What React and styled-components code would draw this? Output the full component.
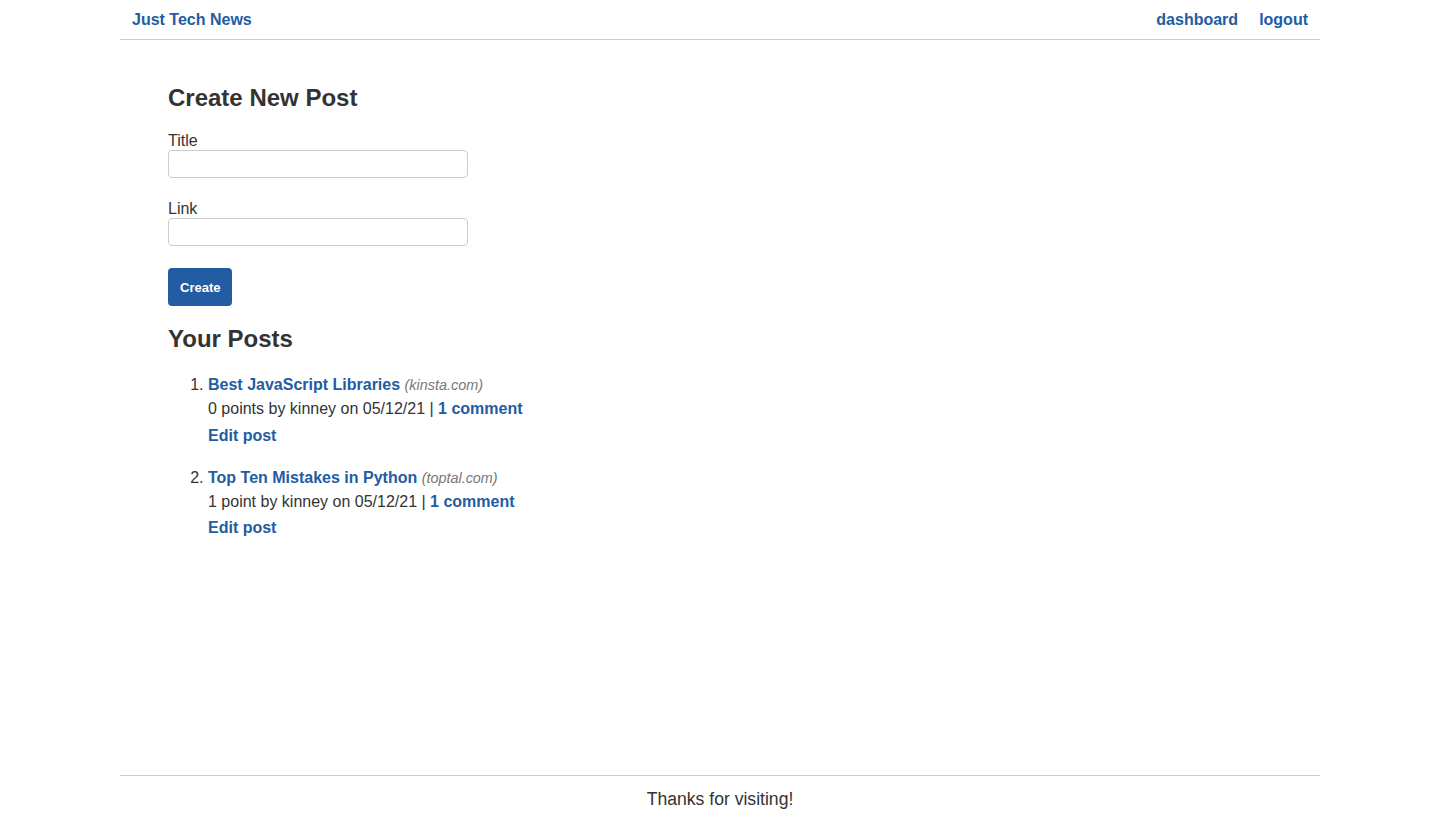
import React from 'react'
import styled, { createGlobalStyle } from 'styled-components'

const GlobalStyle = createGlobalStyle`
    * { box-sizing: border-box; }
    body {
        margin: 0;
        font-family: "Liberation Sans", Arial, Helvetica, sans-serif;
        color: #333;
        background: #fff;
    }
    a { color: #225ca3; text-decoration: none; font-weight: bold; }
`

const posts = [
    { id: 1, title: 'Best JavaScript Libraries', domain: 'kinsta.com', meta: '0 points by kinney on 05/12/21', comments: '1 comment' },
    { id: 2, title: 'Top Ten Mistakes in Python', domain: 'toptal.com', meta: '1 point by kinney on 05/12/21', comments: '1 comment' },
]

const App = () => {
    return (
        <Page>
            <GlobalStyle />
            <Header>
                <Brand href="#">Just Tech News</Brand>
                <Nav>
                    <a href="#">dashboard</a>
                    <a href="#">logout</a>
                </Nav>
            </Header>

            <Main>
                <Heading>Create New Post</Heading>
                <Form onSubmit={e => e.preventDefault()}>
                    <Field>
                        <Label htmlFor="title">Title</Label>
                        <Input id="title" type="text" />
                    </Field>
                    <Field last>
                        <Label htmlFor="link">Link</Label>
                        <Input id="link" type="text" />
                    </Field>
                    <Button type="submit">Create</Button>
                </Form>

                <Heading>Your Posts</Heading>
                <PostList>
                    {posts.map(post => (
                        <PostItem key={post.id}>
                            <div>
                                <a href="#">{post.title}</a> <Domain>({post.domain})</Domain>
                            </div>
                            <div>
                                {post.meta} | <a href="#">{post.comments}</a>
                            </div>
                            <EditLink href="#">Edit post</EditLink>
                        </PostItem>
                    ))}
                </PostList>
            </Main>

            <Footer>Thanks for visiting!</Footer>
        </Page>
    )
}

const Page = styled.div`
    max-width: 1200px;
    margin: 0 auto;
    min-height: 100vh;
    display: flex;
    flex-direction: column;
`

const Header = styled.header`
    display: flex;
    justify-content: space-between;
    align-items: center;
    height: 40px;
    padding: 0 12px;
    border-bottom: 1px solid #ccc;
    font-size: 16px;
`

const Brand = styled.a`
    font-size: 16px;
`

const Nav = styled.nav`
    display: flex;
    gap: 21px;
    font-size: 16px;
`

const Main = styled.main`
    flex: 1;
    padding: 44px 48px 0;
`

const Heading = styled.h2`
    margin: 0 0 19px;
    font-size: 24px;
    line-height: 28px;
    font-weight: bold;
`

const Form = styled.form`
    display: flex;
    flex-direction: column;
    align-items: flex-start;
    margin-bottom: 19px;
`

const Field = styled.div`
    display: flex;
    flex-direction: column;
    margin-bottom: ${props => props.last ? '22px' : '21px'};
`

const Label = styled.label`
    font-size: 16px;
    line-height: 19px;
`

const Input = styled.input`
    width: 300px;
    height: 28px;
    border: 1px solid #ccc;
    border-radius: 4px;
    padding: 0 8px;
    font-size: 14px;
    font-family: inherit;
`

const Button = styled.button`
    height: 38px;
    padding: 0 12px;
    background: #225ca3;
    color: #fff;
    border: none;
    border-radius: 4px;
    font-family: inherit;
    font-weight: bold;
    font-size: 13px;
    cursor: pointer;
`

const PostList = styled.ol`
    margin: 0;
    padding: 1px 0 0 40px;
    font-size: 16px;
    line-height: 24px;
`

const PostItem = styled.li`
    margin-bottom: 18px;
`

const Domain = styled.span`
    font-style: italic;
    font-size: 14.4px;
    color: #777;
`

const EditLink = styled.a`
    display: block;
    margin-top: 2.5px;
`

const Footer = styled.footer`
    border-top: 1px solid #ccc;
    text-align: center;
    font-size: 17.6px;
    line-height: 22px;
    padding: 12px 0 11px;
`

export default App
